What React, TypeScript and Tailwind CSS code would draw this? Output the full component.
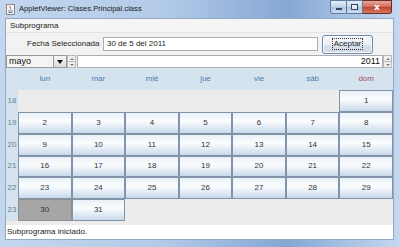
const days = ['lun', 'mar', 'mié', 'jue', 'vie', 'sáb', 'dom'];

const weeks = [
  { n: 18, cells: [null, null, null, null, null, null, 1] },
  { n: 19, cells: [2, 3, 4, 5, 6, 7, 8] },
  { n: 20, cells: [9, 10, 11, 12, 13, 14, 15] },
  { n: 21, cells: [16, 17, 18, 19, 20, 21, 22] },
  { n: 22, cells: [23, 24, 25, 26, 27, 28, 29] },
  { n: 23, cells: [30, 31, null, null, null, null, null] },
];

const JavaIcon = () => (
  <svg width="9" height="11" viewBox="0 0 9 11">
    <rect x="0.5" y="0.5" width="8" height="10" fill="#f4f4f4" stroke="#8a8a8a" />
    <path d="M4 2 C3 3.5 5.5 4 4.5 5.5" stroke="#d0442a" strokeWidth="0.9" fill="none" />
    <path d="M2 7 h5 M2.5 8.5 h4" stroke="#4a6fa0" strokeWidth="0.8" />
  </svg>
);

const TitleBar = () => (
  <div className="relative flex h-[18px] items-center pl-[6px]">
    <JavaIcon />
    <span className="ml-[4px] text-[7.6px] text-[#1a1a1a]">AppletViewer: Clases.Principal.class</span>
    <div className="absolute right-[8px] top-0 flex h-[14px]">
      <div className="flex w-[17px] items-end justify-center rounded-bl-[3px] border border-[#5d7a9e] bg-[linear-gradient(to_bottom,#e2ecf7,#c3d5ea_50%,#abc3e0_51%,#cbdcef)] pb-[3px]">
        <div className="h-[2px] w-[6px] border border-[#35465c] bg-white" />
      </div>
      <div className="flex w-[16px] items-center justify-center border-y border-r border-[#5d7a9e] bg-[linear-gradient(to_bottom,#e2ecf7,#c3d5ea_50%,#abc3e0_51%,#cbdcef)]">
        <div className="h-[6px] w-[7px] border border-[#35465c] bg-white/60" />
      </div>
      <div className="flex w-[29px] items-center justify-center rounded-br-[3px] border-y border-r border-[#6b2a22] bg-[linear-gradient(to_bottom,#e8a89a,#d2695a_50%,#c0402f_51%,#d87a5e)]">
        <span className="text-[9px] font-bold leading-none text-white [font-family:'DejaVu_Sans',sans-serif]">x</span>
      </div>
    </div>
  </div>
);

const Spinner = () => (
  <div className="flex w-[9px] flex-col">
    <div className="flex flex-1 items-center justify-center border border-[#b9b9b9] bg-[#f0f0f0]">
      <div className="h-0 w-0 border-x-[2px] border-b-[2px] border-x-transparent border-b-[#7a7a7a]" />
    </div>
    <div className="flex flex-1 items-center justify-center border border-t-0 border-[#b9b9b9] bg-[#f0f0f0]">
      <div className="h-0 w-0 border-x-[2px] border-t-[2px] border-x-transparent border-t-[#7a7a7a]" />
    </div>
  </div>
);

export default function App() {
  return (
    <div
      className="flex h-[247px] w-[400px] flex-col overflow-hidden bg-[linear-gradient(to_right,#c2d7ee,#b3cbe8_40%,#86a7d4_72%,#a3bfe2_85%,#c4d8ef)] text-[8px] [font-family:'Liberation_Sans',Arial,sans-serif]"
    >
      <TitleBar />
      <div className="mb-[7px] ml-[5px] mr-[6px] flex flex-1 flex-col border border-[#94a9c4] bg-[#f2f2f2]">
        {/* menu */}
        <div className="flex h-[14px] items-center border-b border-[#e2e2e2] bg-[#f5f5f5] pl-[4px] text-[#1a1a1a]">
          Subprograma
        </div>

        {/* fecha */}
        <div className="flex h-[22px] items-center">
          <span className="ml-[21px] w-[76px] text-[#1a1a1a]">Fecha Seleccionada</span>
          <div className="flex h-[14px] w-[215px] items-center border border-[#abadb3] bg-white pl-[3px] text-[#1a1a1a]">
            30 de 5 del 2011
          </div>
          <div className="ml-[4px] flex h-[19px] w-[51px] items-center justify-center rounded-[3px] border border-[#6d8aa8] bg-[linear-gradient(to_bottom,#f4f7fa,#eaf0f5_50%,#d9e3ec_51%,#ccd8e3)] shadow-[inset_0_0_0_1px_#fbfdff]">
            <span className="border border-dotted border-[#333] px-[1px] leading-[10px] text-[#1a1a1a]">Aceptar</span>
          </div>
        </div>

        {/* mes / año */}
        <div className="flex h-[13px]">
          <div className="flex w-[48px] items-center border border-[#9a9a9a] bg-[#f4f4f4] pl-[2px] text-[9px] text-[#111]">
            mayo
          </div>
          <div className="flex w-[13px] items-center justify-center border-y border-r border-[#9a9a9a] bg-[linear-gradient(to_bottom,#f6f6f6,#dcdcdc)]">
            <div className="h-0 w-0 border-x-[3.5px] border-t-[4px] border-x-transparent border-t-[#111]" />
          </div>
          <Spinner />
          <div className="ml-[1px] flex flex-1 items-center justify-end border border-[#abadb3] bg-white pr-[2px] text-[9px] text-[#111]">
            2011
          </div>
          <Spinner />
          <div className="w-[1px]" />
        </div>

        {/* calendario */}
        <div className="flex flex-1 flex-col bg-[#ececec]">
          <div className="flex h-[22px] bg-[#d4e3ee]">
            <div className="w-[12px]" />
            <div className="grid w-[375px] grid-cols-7">
              {days.map((d, i) => (
                <div
                  key={d}
                  className={`flex items-center justify-center ${i === 6 ? 'text-[#a8475e]' : 'text-[#4d7bb0]'}`}
                >
                  {d}
                </div>
              ))}
            </div>
          </div>
          <div className="flex h-[131px]">
            <div className="grid w-[12px] grid-rows-6 bg-[#d4e3ee]">
              {weeks.map((w) => (
                <div key={w.n} className="flex items-center justify-center text-[#5f7f9c]">
                  {w.n}
                </div>
              ))}
            </div>
            <div className="grid w-[375px] grid-cols-7 grid-rows-6">
              {weeks.map((w) =>
                w.cells.map((c, i) =>
                  c === null ? (
                    <div key={`${w.n}-${i}`} />
                  ) : c === 30 ? (
                    <div
                      key={`${w.n}-${i}`}
                      className="flex items-center justify-center border border-[#8e8e8e] bg-[#a6a6a6] text-[#333]"
                    >
                      {c}
                    </div>
                  ) : (
                    <div
                      key={`${w.n}-${i}`}
                      className="flex items-center justify-center border border-[#8294aa] bg-[linear-gradient(to_bottom,#e9f0f7,#fbfdfe_40%,#e3ecf5_70%,#c8d8e9)] text-[#333]"
                    >
                      {c}
                    </div>
                  ),
                ),
              )}
            </div>
          </div>
          <div className="flex-1" />
        </div>

        {/* estado */}
        <div className="flex h-[14px] items-center bg-white pl-[1px] text-[#1a1a1a]">Subprograma iniciado.</div>
      </div>
    </div>
  );
}
